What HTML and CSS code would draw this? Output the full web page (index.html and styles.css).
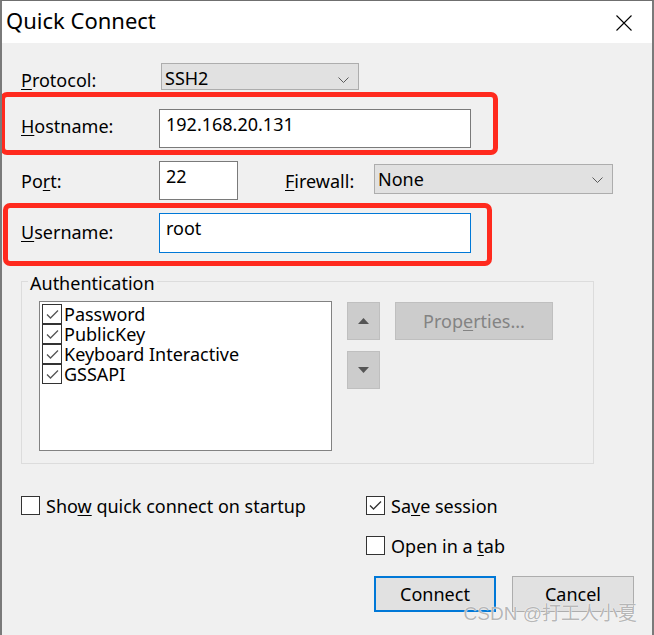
FILE: index.html
```html
<!DOCTYPE html>
<html>
<head>
<meta charset="utf-8">
<title>Quick Connect</title>
<link rel="stylesheet" href="styles.css">
</head>
<body>
<div class="window">
  <div class="titlebar">
    <span class="title">Quick Connect</span>
    <svg class="close" width="16" height="16" viewBox="0 0 16 16"><path d="M0.5 0.5 L15.5 15.5 M15.5 0.5 L0.5 15.5" stroke="#000" stroke-width="1.1" fill="none"/></svg>
  </div>
  <div class="content">
    <div class="row row-protocol">
      <span class="label lbl-protocol"><u>P</u>rotocol:</span>
      <div class="select sel-protocol">
        <span class="sel-text">SSH2</span>
        <svg class="chev" width="11" height="6" viewBox="0 0 11 6"><path d="M0.5 0.5 L5.5 5.5 L10.5 0.5" stroke="#5a5a5a" fill="none"/></svg>
      </div>
    </div>
    <div class="row row-host">
      <span class="label lbl-host"><u>H</u>ostname:</span>
      <div class="input input-wide">192.168.20.131</div>
    </div>
    <div class="row row-port">
      <span class="label lbl-port">Po<u>r</u>t:</span>
      <div class="input input-port">22</div>
      <span class="lbl-fw"><u>F</u>irewall:</span>
      <div class="select sel-fw">
        <span class="sel-text">None</span>
        <svg class="chev" width="11" height="6" viewBox="0 0 11 6"><path d="M0.5 0.5 L5.5 5.5 L10.5 0.5" stroke="#5a5a5a" fill="none"/></svg>
      </div>
    </div>
    <div class="row row-user">
      <span class="label lbl-user"><u>U</u>sername:</span>
      <div class="input input-wide input-focus">root</div>
    </div>

    <fieldset class="auth">
      <legend class="auth-legend">Authentication</legend>
      <div class="auth-body">
        <div class="listbox">
          <div class="item"><span class="lcb"><svg width="17" height="17" viewBox="0 0 17 17"><path d="M3 8.5 L6.5 12 L14 4.5" stroke="#555" stroke-width="1.3" fill="none"/></svg></span><span class="item-text">Password</span></div>
          <div class="item"><span class="lcb"><svg width="17" height="17" viewBox="0 0 17 17"><path d="M3 8.5 L6.5 12 L14 4.5" stroke="#555" stroke-width="1.3" fill="none"/></svg></span><span class="item-text">PublicKey</span></div>
          <div class="item"><span class="lcb"><svg width="17" height="17" viewBox="0 0 17 17"><path d="M3 8.5 L6.5 12 L14 4.5" stroke="#555" stroke-width="1.3" fill="none"/></svg></span><span class="item-text">Keyboard Interactive</span></div>
          <div class="item"><span class="lcb"><svg width="17" height="17" viewBox="0 0 17 17"><path d="M3 8.5 L6.5 12 L14 4.5" stroke="#555" stroke-width="1.3" fill="none"/></svg></span><span class="item-text">GSSAPI</span></div>
        </div>
        <div class="arrows">
          <div class="arrow-btn"><svg width="11" height="6" viewBox="0 0 11 6"><path d="M0 6 L5.5 0 L11 6 Z" fill="#555"/></svg></div>
          <div class="arrow-btn"><svg width="11" height="6" viewBox="0 0 11 6"><path d="M0 0 L11 0 L5.5 6 Z" fill="#555"/></svg></div>
        </div>
        <div class="props">Prop<u>e</u>rties...</div>
      </div>
    </fieldset>

    <div class="options">
      <div class="opt"><span class="cb"></span><span>Sho<u>w</u> quick connect on startup</span></div>
      <div class="opt"><span class="cb"><svg width="17" height="17" viewBox="0 0 17 17"><path d="M3 8.5 L6.5 12 L14 4.5" stroke="#333" stroke-width="1.3" fill="none"/></svg></span><span>Sa<u>v</u>e session</span></div>
      <div class="opt-spacer"></div>
      <div class="opt"><span class="cb"></span><span>Open in a <u>t</u>ab</span></div>
    </div>

    <div class="buttons">
      <div class="btn btn-default">Connect</div>
      <div class="btn">Cancel</div>
    </div>
  </div>

  <div class="annot annot-host"></div>
  <div class="annot annot-user"></div>
  <div class="watermark">CSDN @打工人小夏</div>
</div>
</body>
</html>
```

FILE: styles.css
```css
* { box-sizing: border-box; }

html, body {
  margin: 0;
  padding: 0;
  background: #f0f0f0;
}

body {
  font-family: "Noto Sans", "Open Sans", sans-serif;
  font-size: 18px;
  line-height: 23px;
  color: #000;
}

u {
  text-decoration: underline;
  text-decoration-thickness: 1px;
  text-underline-offset: 2px;
}

.window {
  position: relative;
  width: 654px;
  height: 635px;
  overflow: hidden;
  background: #f0f0f0;
  border-top: 1px solid #6f6f6f;
  border-left: 2px solid #7a7a7a;
  border-right: 2px solid #7a7a7a;
}

.titlebar {
  height: 42px;
  background: #fff;
  display: flex;
  align-items: center;
  justify-content: space-between;
  padding: 0 20px 0 4px;
}

.title {
  font-size: 22px;
  line-height: 30px;
  margin-top: -5px;
  margin-left: 0;
}

.close {
  display: block;
  margin-top: 1px;
}

.content {
  padding-left: 19px;
}

.row {
  display: flex;
  align-items: flex-start;
}

.label {
  width: 138px;
  flex: none;
}

.row-protocol { margin-top: 20px; height: 27px; }
.row-host { margin-top: 19px; height: 39px; }
.row-port { margin-top: 13px; height: 39px; }
.row-user { margin-top: 13px; height: 39px; }

.lbl-protocol { margin-top: 6px; }
.lbl-host { margin-top: 6px; }
.lbl-port { margin-top: 9px; }
.lbl-user { margin-top: 8px; }

.select {
  display: flex;
  align-items: flex-start;
  justify-content: space-between;
  background: #e1e1e1;
  border: 1px solid #adadad;
  padding: 3px 9px 0 3px;
}

.sel-protocol {
  width: 198px;
  height: 27px;
  margin-left: 2px;
}

.sel-fw {
  width: 239px;
  height: 30px;
  margin-top: 3px;
  padding-top: 3px;
}

.chev {
  display: block;
}

.sel-protocol .chev { margin-top: 10px; }
.sel-fw .chev { margin-top: 9px; }

.input {
  background: #fff;
  border: 1px solid #7a7a7a;
  padding: 3px 6px 0 6px;
  height: 39px;
}

.input-wide { width: 312px; }
.input-port { width: 79px; }
.input-focus {
  border-color: #0078d7;
  height: 40px;
}

.lbl-fw {
  width: 89px;
  flex: none;
  margin-left: 47px;
  margin-top: 9px;
}

/* Authentication group */
.auth {
  margin: 18px 0 0 0;
  width: 573px;
  border: 1px solid #dcdcdc;
  padding: 8px 12px 12px 17px;
  min-width: 0;
}

.auth-legend {
  padding: 0 2px;
  margin-left: -11px;
  line-height: 23px;
  position: relative;
  top: 2px;
}

.auth-body {
  display: flex;
  align-items: flex-start;
}

.listbox {
  width: 293px;
  height: 150px;
  background: #fff;
  border: 1px solid #828282;
  padding: 2px;
}

.item {
  display: flex;
  align-items: center;
  height: 20px;
  white-space: nowrap;
}

.item-text {
  line-height: 20px;
  height: 20px;
  display: block;
  overflow: visible;
}

.lcb {
  width: 20px;
  height: 20px;
  border: 1px solid #333;
  background: #fff;
  margin-right: 2px;
  display: flex;
  align-items: center;
  justify-content: center;
  flex: none;
}

.lcb svg { display: block; }

.arrows {
  display: flex;
  flex-direction: column;
  gap: 11px;
  margin-left: 15px;
  margin-top: 1px;
}

.arrow-btn {
  width: 33px;
  height: 38px;
  background: #cccccc;
  border: 1px solid #bfbfbf;
  display: flex;
  align-items: center;
  justify-content: center;
}

.arrow-btn svg { display: block; }

.props {
  margin-left: 15px;
  margin-top: 1px;
  width: 158px;
  height: 38px;
  background: #cccccc;
  border: 1px solid #bfbfbf;
  color: #838383;
  display: flex;
  align-items: center;
  justify-content: center;
}

/* Options */
.options {
  display: grid;
  grid-template-columns: 345px auto;
  row-gap: 17px;
  margin-top: 31px;
}

.opt {
  display: flex;
  align-items: flex-start;
  height: 23px;
  white-space: nowrap;
}

.cb {
  width: 19px;
  height: 19px;
  margin-top: 1px;
  margin-right: 6px;
  border: 1px solid #333;
  background: #fff;
  display: flex;
  align-items: center;
  justify-content: center;
  flex: none;
}

.cb svg { display: block; }

.buttons {
  display: flex;
  justify-content: flex-end;
  gap: 16px;
  margin-top: 18px;
  padding-right: 18px;
}

.btn {
  width: 122px;
  height: 36px;
  background: #e1e1e1;
  border: 1px solid #adadad;
  display: flex;
  align-items: center;
  justify-content: center;
}

.btn-default {
  border: 2px solid #0078d7;
}

/* Annotation overlays */
.annot {
  position: absolute;
  border: 5px solid #ff2a1e;
  border-radius: 7px;
}

.annot-host {
  left: -2px;
  top: 91px;
  width: 498px;
  height: 63px;
}

.annot-user {
  left: 1px;
  top: 202px;
  width: 489px;
  height: 63px;
}

.watermark {
  position: absolute;
  right: 15px;
  bottom: 8px;
  font-family: "Liberation Sans", "Noto Sans CJK SC", sans-serif;
  font-size: 19px;
  line-height: 26px;
  color: rgba(120, 120, 120, 0.55);
  text-shadow: 0 0 1px #fff, 0 0 1px #fff;
  white-space: nowrap;
}
```
